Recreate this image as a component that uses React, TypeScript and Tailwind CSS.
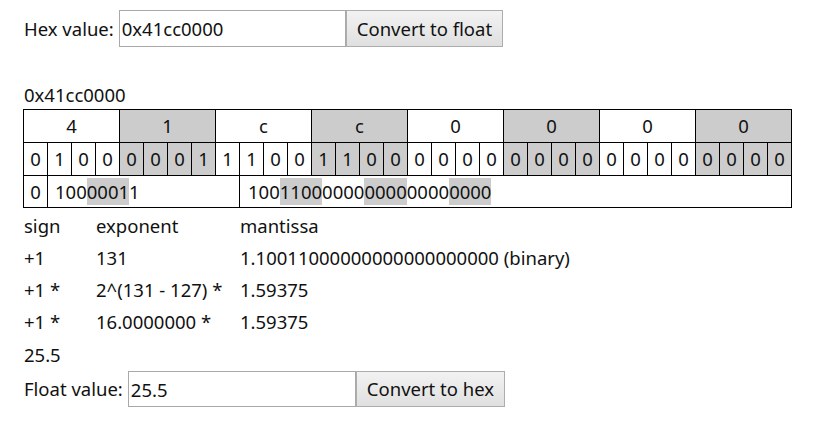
import { useState } from 'react';

const GRAY = 'bg-[#cccccc]';

function toBits(hex: string): string {
  const n = parseInt(hex.replace(/^0x/i, ''), 16) >>> 0;
  return n.toString(2).padStart(32, '0');
}

// split a bit range into runs that follow the nibble shading
function runs(bits: string, start: number, end: number) {
  const out: { text: string; shaded: boolean }[] = [];
  for (let i = start; i < end; i++) {
    const shaded = Math.floor(i / 4) % 2 === 1;
    const last = out[out.length - 1];
    if (last && last.shaded === shaded) last.text += bits[i];
    else out.push({ text: bits[i], shaded });
  }
  return out;
}

export default function App() {
  const [hex, setHex] = useState('0x41cc0000');
  const [floatVal, setFloatVal] = useState('25.5');

  const bits = toBits(hex);
  const digits = hex.replace(/^0x/i, '').padStart(8, '0').split('');
  const exp = parseInt(bits.slice(1, 9), 2);
  const mant = 1 + parseInt(bits.slice(9), 2) / 2 ** 23;

  const row = 'flex items-center';

  return (
    <div className="px-6 pt-[10px] text-[18.5px] leading-[32px] text-[#111] font-['Noto_Sans',sans-serif]">
      <div className={row}>
        <span className="mr-[5px]">Hex value:</span>
        <input
          value={hex}
          onChange={(e) => setHex(e.target.value)}
          className="w-[227px] h-[37px] border border-[#a9a9a9] px-[2px] outline-none"
        />
        <button className="h-[37px] px-[10px] border border-[#adadad] bg-gradient-to-b from-[#f2f2f2] to-[#e0e0e0]">
          Convert to float
        </button>
      </div>

      <div className="mt-[34px] leading-[28px]">{hex}</div>

      <div className="-ml-px grid w-[769px] grid-cols-[repeat(32,23px)] grid-rows-[32px_32px_31px] gap-px bg-black p-px">
        {digits.map((d, i) => (
          <div key={'h' + i} className={`col-span-4 flex items-center justify-center ${i % 2 ? GRAY : 'bg-white'}`}>
            {d}
          </div>
        ))}
        {bits.split('').map((b, i) => (
          <div key={'b' + i} className={`flex items-center justify-center ${Math.floor(i / 4) % 2 ? GRAY : 'bg-white'}`}>
            {b}
          </div>
        ))}
        <div className="flex items-center justify-center bg-white">{bits[0]}</div>
        <div className="col-span-8 flex items-center bg-white pl-[7px] leading-[27px]">
          {runs(bits, 1, 9).map((r, i) => (
            <span key={i} className={r.shaded ? GRAY : ''}>{r.text}</span>
          ))}
        </div>
        <div className="col-span-23 flex items-center bg-white pl-[8px] leading-[27px]">
          {runs(bits, 9, 32).map((r, i) => (
            <span key={i} className={r.shaded ? GRAY : ''}>{r.text}</span>
          ))}
        </div>
      </div>

      <table className="mt-[2px]">
        <tbody>
          <tr>
            <td className="w-[72px]">sign</td>
            <td className="w-[144px]">exponent</td>
            <td>mantissa</td>
          </tr>
          <tr>
            <td>{bits[0] === '1' ? '-1' : '+1'}</td>
            <td>{exp}</td>
            <td>1.{bits.slice(9)} (binary)</td>
          </tr>
          <tr>
            <td>+1 *</td>
            <td>2^({exp} - 127) *</td>
            <td>{mant}</td>
          </tr>
          <tr>
            <td>+1 *</td>
            <td>{(2 ** (exp - 127)).toFixed(7)} *</td>
            <td>{mant}</td>
          </tr>
        </tbody>
      </table>
      <div className="mt-[1px]">{floatVal}</div>

      <div className={row}>
        <span className="mr-[5px]">Float value:</span>
        <input
          value={floatVal}
          onChange={(e) => setFloatVal(e.target.value)}
          className="w-[228px] h-[36px] border border-[#a9a9a9] px-[2px] outline-none"
        />
        <button className="h-[36px] px-[10px] border border-[#adadad] bg-gradient-to-b from-[#f2f2f2] to-[#e0e0e0]">
          Convert to hex
        </button>
      </div>
    </div>
  );
}
